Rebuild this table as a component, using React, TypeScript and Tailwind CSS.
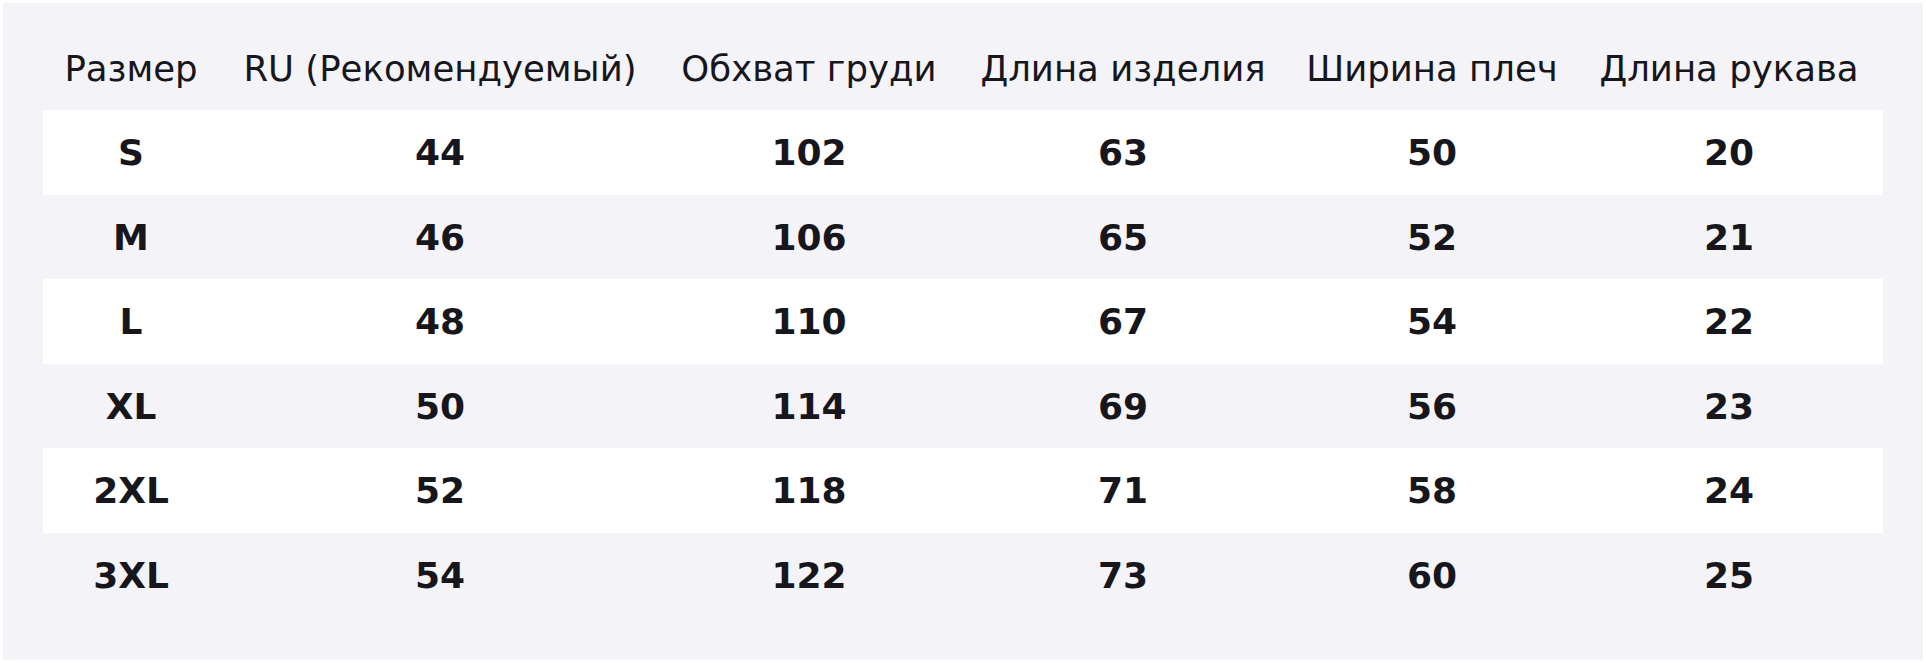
const headers = [
  "Размер",
  "RU (Рекомендуемый)",
  "Обхват груди",
  "Длина изделия",
  "Ширина плеч",
  "Длина рукава",
];

const rows = [
  ["S", "44", "102", "63", "50", "20"],
  ["M", "46", "106", "65", "52", "21"],
  ["L", "48", "110", "67", "54", "22"],
  ["XL", "50", "114", "69", "56", "23"],
  ["2XL", "52", "118", "71", "58", "24"],
  ["3XL", "54", "122", "73", "60", "25"],
];

export default function App() {
  return (
    <div className="bg-white p-[3px] font-['DejaVu_Sans',sans-serif] text-[#16161c]">
      <div className="bg-[#f4f3f8] px-[40px] pt-[24px] pb-[43px]">
        <div className="grid h-[83px] grid-cols-[176px_442px_296px_332px_286px_308px] items-center text-center text-[35.5px] leading-none">
          {headers.map((h) => (
            <div key={h} className="whitespace-nowrap">
              {h}
            </div>
          ))}
        </div>
        {rows.map((row, i) => (
          <div
            key={row[0]}
            className={`grid h-[84.5px] grid-cols-[176px_442px_296px_332px_286px_308px] items-center pt-[2px] text-center text-[36px] font-bold leading-none ${
              i % 2 === 0 ? "bg-white" : ""
            }`}
          >
            {row.map((cell, j) => (
              <div key={j}>{cell}</div>
            ))}
          </div>
        ))}
      </div>
    </div>
  );
}
